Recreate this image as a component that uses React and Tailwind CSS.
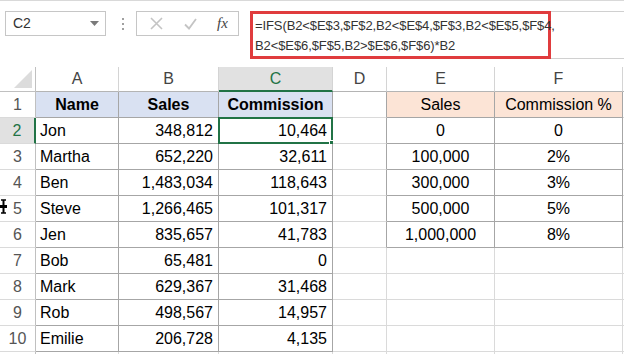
import React from 'react';

const widths = ['w-[83px]', 'w-[100px]', 'w-[114px]', 'w-[54px]', 'w-[108px]', 'w-[128px]'];
const letters = ['A', 'B', 'C', 'D', 'E', 'F'];

const rows = [
  ['Name', 'Sales', 'Commission', '', 'Sales', 'Commission %'],
  ['Jon', '348,812', '10,464', '', '0', '0'],
  ['Martha', '652,220', '32,611', '', '100,000', '2%'],
  ['Ben', '1,483,034', '118,643', '', '300,000', '3%'],
  ['Steve', '1,266,465', '101,317', '', '500,000', '5%'],
  ['Jen', '835,657', '41,783', '', '1,000,000', '8%'],
  ['Bob', '65,481', '0', '', '', ''],
  ['Mark', '629,367', '31,468', '', '', ''],
  ['Rob', '498,567', '14,957', '', '', ''],
  ['Emilie', '206,728', '4,135', '', '', ''],
  ['', '', '', '', '', ''],
];

const inTable = (r, c) => (c <= 2 && r <= 10) || (c >= 4 && r <= 6);

const Cell = ({ r, c, text }) => {
  const right = inTable(r, c) || (c === 3 && r <= 6) ? 'border-r-[#a6a6a6]' : 'border-r-[#dadada]';
  const bottom = inTable(r, c) ? 'border-b-[#a6a6a6]' : 'border-b-[#dadada]';
  let fill = 'bg-white';
  if (r === 1 && c <= 2) fill = 'bg-[#d9e1f2]';
  if (r === 1 && c >= 4) fill = 'bg-[#fce4d6]';
  let align = 'justify-end pr-[5px]';
  if (c === 0) align = 'justify-start pl-[4px]';
  if (r === 1 || c >= 4) align = 'justify-center';
  return (
    <div className={`relative flex items-center shrink-0 h-full border-r border-b ${widths[c]} ${right} ${bottom} ${fill} ${align} ${r === 1 && c <= 2 ? 'font-bold' : ''}`}>
      <span className="whitespace-nowrap">{text}</span>
      {r === 2 && c === 2 && (
        <div className="absolute -left-px -top-px -right-px -bottom-px border-2 border-[#217346]">
          <div className="absolute -right-[4px] -bottom-[4px] w-[6px] h-[6px] bg-[#217346] border border-white" />
        </div>
      )}
    </div>
  );
};

export default function App() {
  return (
    <div className="relative w-[624px] h-[354px] overflow-hidden bg-white text-black" style={{ fontFamily: '"Liberation Sans", Arial, sans-serif' }}>
      {/* formula bar */}
      <div className="h-[67px] border-t border-[#d9d9d9] flex items-start pt-[10px]">
        <div className="ml-[5px] w-[101px] h-[25px] border border-[#c6c6c6] flex items-center justify-between pl-[7px] pr-[6px] text-[14px] text-[#333]">
          <span>C2</span>
          <svg width="9" height="5" viewBox="0 0 9 5"><path d="M0 0h9L4.5 5z" fill="#7a7a7a" /></svg>
        </div>
        <div className="ml-[15px] w-[3px] h-[25px] flex flex-col items-center justify-center gap-[3px]">
          <div className="w-[2px] h-[2px] bg-[#a0a0a0]" />
          <div className="w-[2px] h-[2px] bg-[#a0a0a0]" />
          <div className="w-[2px] h-[2px] bg-[#a0a0a0]" />
        </div>
        <div className="ml-[12px] w-[103px] h-[25px] border border-[#c6c6c6] flex items-center pl-[13px]">
          <svg width="13" height="13" viewBox="0 0 13 13"><path d="M1 1l11 11M12 1L1 12" stroke="#c4c4c4" strokeWidth="1.6" /></svg>
          <svg className="ml-[21px]" width="13" height="12" viewBox="0 0 13 12"><path d="M1 6.5l4 4L12 1" stroke="#c4c4c4" strokeWidth="1.8" fill="none" /></svg>
          <span className="ml-[20px] text-[15px] italic text-[#444]" style={{ fontFamily: '"Liberation Serif", serif' }}>fx</span>
        </div>
        <div className="ml-[11px] flex-1 h-[48px] border-y border-[#d0d0d0]">
          <div className="w-[301px] h-[48px] -mt-px border-[3px] border-[#e03c3e] pl-[2px] pt-[2px] text-[13px] leading-[20px] text-[#333] tracking-[-0.1px] whitespace-nowrap">
            <div>=IFS(B2&lt;$E$3,$F$2,B2&lt;$E$4,$F$3,B2&lt;$E$5,$F$4,</div>
            <div>B2&lt;$E$6,$F$5,B2&gt;$E$6,$F$6)*B2</div>
          </div>
        </div>
      </div>

      {/* column headers */}
      <div className="flex h-[25px] text-[16px] text-[#444]">
        <div className="w-[36px] shrink-0 border-r border-b border-[#c0c0c0] flex items-end justify-end pr-[3px] pb-[3px]">
          <svg width="18" height="18" viewBox="0 0 18 18"><path d="M18 0V18H0z" fill="#dcdcdc" /></svg>
        </div>
        {letters.map((l, i) => (
          <div
            key={l}
            className={`${widths[i]} shrink-0 flex items-center justify-center border-r border-r-[#d4d4d4] ${i === 2 ? 'bg-[#e1e1e1] text-[#217346] border-b-2 border-b-[#217346]' : 'border-b border-b-[#b4b4b4]'}`}
          >
            {l}
          </div>
        ))}
        <div className="flex-1 border-b border-[#b4b4b4]" />
      </div>

      {/* rows */}
      {rows.map((row, idx) => {
        const r = idx + 1;
        return (
          <div key={r} className="flex h-[26px] text-[16px]">
            <div className={`w-[36px] shrink-0 flex items-center justify-center border-b border-b-[#dadada] ${r === 2 ? 'bg-[#e1e1e1] text-[#217346] border-r-2 border-r-[#217346]' : 'text-[#555] border-r border-r-[#c0c0c0]'}`}>
              {r <= 10 ? r : ''}
            </div>
            {row.map((t, c) => (
              <Cell key={c} r={r} c={c} text={t} />
            ))}
            <div className="flex-1 border-b border-[#dadada]" />
          </div>
        );
      })}

      {/* row-resize cursor */}
      <svg className="absolute left-0 top-[199px]" width="8" height="15" viewBox="0 0 8 15">
        <path d="M0 6h7v3H0z" fill="#000" />
        <path d="M3.5 1v13" stroke="#000" strokeWidth="2" />
        <path d="M1 1h5M1 14h5" stroke="#000" strokeWidth="1.5" />
      </svg>
    </div>
  );
}
